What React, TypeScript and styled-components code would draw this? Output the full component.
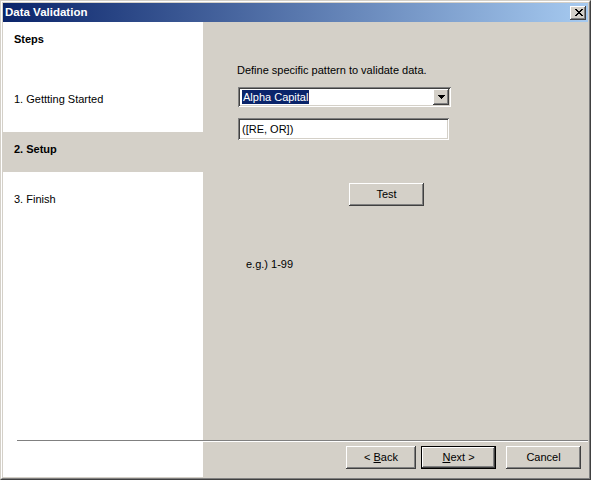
import styled, { createGlobalStyle, css } from 'styled-components';

const GlobalStyle = createGlobalStyle`
  html, body {
    margin: 0;
    padding: 0;
    background: #d4d0c8;
  }
  body {
    font-family: 'Liberation Sans', Arial, sans-serif;
    font-size: 11px;
    color: #000;
  }
`;

const raised = css`
  background: #d4d0c8;
  box-shadow: inset -1px -1px #404040, inset 1px 1px #fff,
    inset -2px -2px #808080, inset 2px 2px #d4d0c8;
`;

const sunken = css`
  background: #fff;
  box-shadow: inset 1px 1px #808080, inset -1px -1px #fff,
    inset 2px 2px #404040, inset -2px -2px #d4d0c8;
`;

const steps = [
  { label: '1. Gettting Started', active: false },
  { label: '2. Setup', active: true },
  { label: '3. Finish', active: false },
];

const App = () => (
  <>
    <GlobalStyle />
    <Window>
      <Frame>
        <TitleBar>
          <Title>Data Validation</Title>
          <CloseButton aria-label="Close">
            <svg width="8" height="7" viewBox="0 0 8 7">
              <path
                d="M0 0h2v1h1v1h2V1h1V0h2v1H7v1H6v1H5v1h1v1h1v1h1v1H6V6H5V5H3v1H2v1H0V6h1V5h1V4h1V3H2V2H1V1H0z"
                fill="#000"
              />
            </svg>
          </CloseButton>
        </TitleBar>
        <Body>
          <Sidebar>
            <StepsHeading>Steps</StepsHeading>
            {steps.map((s) => (
              <StepItem key={s.label} $active={s.active}>
                {s.label}
              </StepItem>
            ))}
          </Sidebar>
          <Panel>
            <Prompt>Define specific pattern to validate data.</Prompt>
            <Combo>
              <ComboValue>
                <Selected>Alpha Capital</Selected>
              </ComboValue>
              <ComboButton>
                <svg width="7" height="4" viewBox="0 0 7 4">
                  <path d="M0 0h7v1H6v1H5v1H4v1H3V3H2V2H1V1H0z" fill="#000" />
                </svg>
              </ComboButton>
            </Combo>
            <TextBox>([RE, OR])</TextBox>
            <TestButton>Test</TestButton>
            <Example>e.g.) 1-99</Example>
          </Panel>
          <Separator />
          <Footer>
            <Button $w={70}>
              {'<\u00a0'}
              <u>B</u>ack
            </Button>
            <DefaultButton>
              <u>N</u>ext{'\u00a0>'}
            </DefaultButton>
            <Button $w={75} $gap={10}>
              Cancel
            </Button>
          </Footer>
        </Body>
      </Frame>
    </Window>
  </>
);

export default App;

const Window = styled.div`
  width: 591px;
  height: 480px;
  box-sizing: border-box;
  border: 1px solid;
  border-color: #d4d0c8 #404040 #404040 #d4d0c8;
`;

const Frame = styled.div`
  height: 100%;
  box-sizing: border-box;
  border: 1px solid;
  border-color: #fff #808080 #808080 #fff;
  padding: 1px;
  display: flex;
  flex-direction: column;
  background: #d4d0c8;
`;

const TitleBar = styled.div`
  height: 19px;
  flex: none;
  display: flex;
  align-items: center;
  justify-content: space-between;
  padding: 0 2px 0 2px;
  background: linear-gradient(to right, #0a246a, #a6caf0);
`;

const Title = styled.span`
  color: #fff;
  font-weight: bold;
  font-size: 11.5px;
  line-height: 13px;
`;

const CloseButton = styled.div`
  ${raised};
  width: 16px;
  height: 14px;
  display: flex;
  align-items: center;
  justify-content: center;
  box-sizing: border-box;
  padding-left: 1px;
`;

const Body = styled.div`
  flex: 1;
  display: grid;
  grid-template-columns: 200px 1fr;
  grid-template-rows: 418px 1fr;
`;

const Sidebar = styled.div`
  grid-row: 1 / span 2;
  grid-column: 1;
  background: #fff;
  padding-top: 11px;
`;

const StepsHeading = styled.div`
  font-weight: bold;
  line-height: 13px;
  padding-left: 11px;
  margin-bottom: 36px;
`;

const StepItem = styled.div<{ $active: boolean }>`
  height: 40px;
  box-sizing: border-box;
  padding: 11px 0 0 11px;
  line-height: 13px;
  margin-bottom: 10px;
  background: ${({ $active }) => ($active ? '#d4d0c8' : 'transparent')};
  font-weight: ${({ $active }) => ($active ? 'bold' : 'normal')};
`;

const Panel = styled.div`
  grid-row: 1;
  grid-column: 2;
  padding: 42px 0 0 35px;
  display: flex;
  flex-direction: column;
  align-items: flex-start;
`;

const Prompt = styled.div`
  line-height: 13px;
  margin-left: -1px;
`;

const Combo = styled.div`
  ${sunken};
  margin-top: 10px;
  width: 213px;
  height: 20px;
  box-sizing: border-box;
  padding: 2px;
  display: flex;
  align-items: stretch;
`;

const ComboValue = styled.div`
  flex: 1;
  display: flex;
  align-items: center;
  padding-left: 2px;
`;

const Selected = styled.span`
  background: #0a246a;
  color: #fff;
  line-height: 14px;
  padding: 0 1px;
`;

const ComboButton = styled.div`
  ${raised};
  width: 16px;
  display: flex;
  align-items: center;
  justify-content: center;
`;

const TextBox = styled.div`
  ${sunken};
  margin-top: 11px;
  width: 211px;
  height: 22px;
  box-sizing: border-box;
  padding: 0 4px;
  display: flex;
  align-items: center;
  line-height: 13px;
`;

const Button = styled.div<{ $w: number; $gap?: number }>`
  ${raised};
  width: ${({ $w }) => $w}px;
  height: 23px;
  margin-left: ${({ $gap }) => $gap ?? 0}px;
  box-sizing: border-box;
  display: flex;
  align-items: center;
  justify-content: center;
  line-height: 13px;
  white-space: pre;

  u {
    text-underline-offset: 1px;
  }
`;

const TestButton = styled(Button).attrs({ $w: 75 })`
  margin-top: 43px;
  margin-left: 111px;
`;

const DefaultButton = styled.div`
  width: 75px;
  height: 23px;
  margin-left: 5px;
  box-sizing: border-box;
  border: 1px solid #000;
  background: #d4d0c8;
  box-shadow: inset -1px -1px #404040, inset 1px 1px #fff,
    inset -2px -2px #808080;
  display: flex;
  align-items: center;
  justify-content: center;
  line-height: 13px;
  white-space: pre;

  u {
    text-underline-offset: 1px;
  }
`;

const Example = styled.div`
  margin-top: 52px;
  margin-left: 8px;
  line-height: 13px;
`;

const Separator = styled.div`
  grid-row: 2;
  grid-column: 1 / -1;
  align-self: start;
  margin-left: 14px;
  border-top: 1px solid #808080;
  border-bottom: 1px solid #fff;
  height: 0;
  position: relative;
  z-index: 1;
`;

const Footer = styled.div`
  grid-row: 2;
  grid-column: 2;
  display: flex;
  justify-content: flex-end;
  align-items: flex-start;
  padding: 6px 7px 0 0;
`;
